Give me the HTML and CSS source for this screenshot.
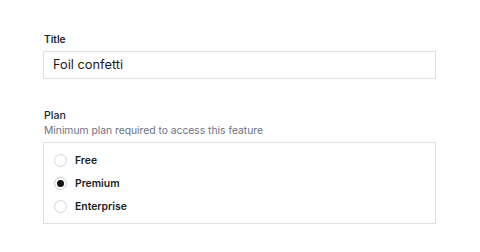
FILE: index.html
```
<!DOCTYPE html>
<html>
<head>
<meta charset="utf-8">
<link rel="stylesheet" href="styles.css">
</head>
<body>
<div class="form">
  <div class="field">
    <label class="field-label">Title</label>
    <div class="input">Foil confetti</div>
  </div>
  <div class="field field-plan">
    <div class="field-label">Plan</div>
    <div class="helper">Minimum plan required to access this feature</div>
    <div class="options">
      <div class="option"><span class="radio"></span><span class="option-label">Free</span></div>
      <div class="option"><span class="radio radio-checked"></span><span class="option-label">Premium</span></div>
      <div class="option"><span class="radio"></span><span class="option-label">Enterprise</span></div>
    </div>
  </div>
</div>
</body>
</html>
```
FILE: styles.css
```
html, body {
  margin: 0;
  padding: 0;
  background: #ffffff;
}
body {
  font-family: Inter, "Liberation Sans", Arial, sans-serif;
  color: #1c1f24;
}
.form {
  padding: 32px 0 0 43px;
  width: 393px;
}
.field {
  display: flex;
  flex-direction: column;
}
.field-plan {
  margin-top: 30px;
}
.field-label {
  font-size: 10.1px;
  font-weight: 600;
  line-height: 14px;
  margin-bottom: 5px;
  padding-left: 1px;
}
.field-plan .field-label {
  margin-bottom: 0;
  font-weight: 500;
  font-size: 10.6px;
}
.helper {
  font-size: 10.3px;
  line-height: 14px;
  color: #6b7384;
  margin-bottom: 5px;
  padding-left: 1px;
}
.input {
  box-sizing: border-box;
  height: 28px;
  border: 1px solid #dcdfe6;
  padding: 0 9px;
  font-size: 12.8px;
  line-height: 26px;
  color: #1a1c20;
}
.options {
  box-sizing: border-box;
  height: 82px;
  border: 1px solid #dcdfe6;
  padding: 6px 10px 5px;
  display: flex;
  flex-direction: column;
}
.option {
  height: 23px;
  display: flex;
  align-items: center;
  gap: 8px;
}
.radio {
  box-sizing: border-box;
  width: 13px;
  height: 13px;
  border-radius: 50%;
  border: 1px solid #d3d6dc;
  background: #fff;
  display: flex;
  align-items: center;
  justify-content: center;
}
.radio-checked {
  border-color: #c8cbd1;
}
.radio-checked::after {
  content: "";
  width: 7px;
  height: 7px;
  border-radius: 50%;
  background: #111;
}
.option-label {
  font-size: 10.4px;
  font-weight: 600;
  color: #1c1f24;
}
```
